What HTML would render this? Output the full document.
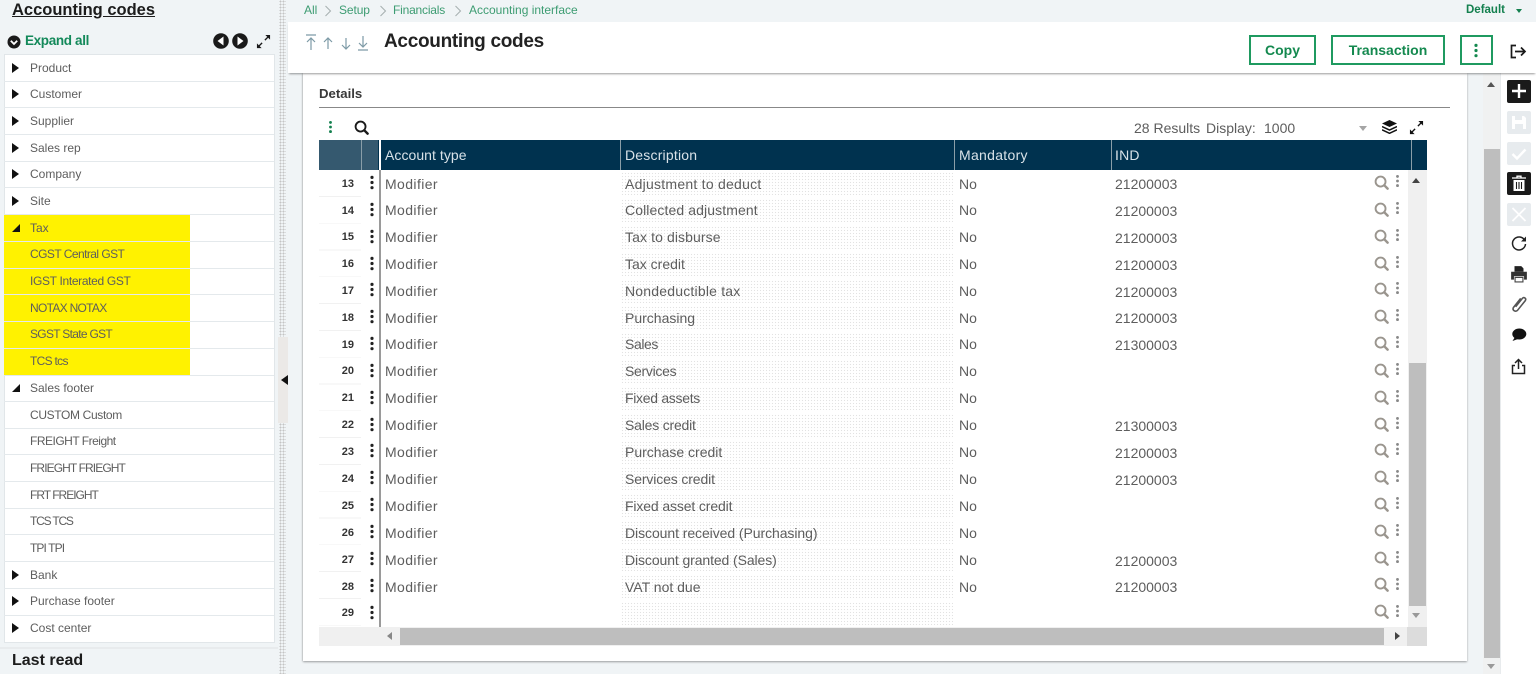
<!DOCTYPE html>
<html><head><meta charset="utf-8"><title>Accounting codes</title>
<style>
html,body{margin:0;padding:0;width:1536px;height:674px;overflow:hidden;background:#f0f4f6;font-family:"Liberation Sans",sans-serif;color:#585858}
div,span,svg{position:absolute;white-space:nowrap}
.t{left:30px;font-size:12px;line-height:16px;color:#5d5d5d}
.l{left:4px;width:270px;height:1px;background:#e4e9ec}
.a{left:12px;width:0;height:0;border-left:7px solid #111;border-top:5px solid transparent;border-bottom:5px solid transparent}
.o{left:12px;width:0;height:0;border-right:8px solid #111;border-top:8px solid transparent}
.n{left:319px;width:35px;text-align:right;font-size:11px;font-weight:bold;color:#333;line-height:14px}
.c{font-size:14px;line-height:18px;color:#5d5d5d}
.m{left:385px;letter-spacing:.4px}.k{left:959px}.i{left:1115px}.e{left:625px}
.d{left:621px;width:332px;height:23px;background-color:#fff;background-image:radial-gradient(#e2e2e2 0.7px,transparent 0.8px);background-size:3px 3px}
.h{top:146px;font-size:14px;line-height:18px;letter-spacing:.2px;color:#d8e2e8}
.v{width:1px;top:140px;height:30px;background:#8a9ea8}
.b{height:26px;border:2px solid #1f9a60;background:#fff;color:#14894f;font-weight:bold;font-size:14px;line-height:26px;text-align:center;top:35px}
.r{left:1507px;width:24px;height:23px;border-radius:2px;background:#1a1a1a}
.g{background:#e7ebee}
.bc{top:3px;font-size:12px;line-height:15px;color:#3d9c72}
.sp{top:5px}
</style></head><body>
<svg width="0" height="0" style="left:0;top:0"><defs>
<symbol id="q" viewBox="0 0 16 16"><circle cx="7" cy="7" r="5.3" fill="none" stroke="currentColor" stroke-width="2"/><path d="M11 11l3.5 3.500" stroke="currentColor" stroke-width="2.600" stroke-linecap="round"/></symbol>
<symbol id="v" viewBox="0 0 6 16"><circle cx="3" cy="2.500" r="1.700" fill="currentColor"/><circle cx="3" cy="8" r="1.700" fill="currentColor"/><circle cx="3" cy="13.500" r="1.700" fill="currentColor"/></symbol>
<symbol id="x" viewBox="0 0 16 16"><path d="M9.500 6.500L13 3" stroke="currentColor" fill="none" stroke-width="1.500"/><path d="M10 1h5v5z" fill="currentColor"/><path d="M6.500 9.500L3 13" stroke="currentColor" fill="none" stroke-width="1.500"/><path d="M1 10v5h5z" fill="currentColor"/></symbol>
<symbol id="s" viewBox="0 0 8 12"><path d="M1.500 1l5 5-5 5" fill="none" stroke="#a5afaf" stroke-width="1"/></symbol>
</defs></svg>

<!-- left panel -->
<div style="left:12px;top:0;font-size:16.500px;font-weight:bold;line-height:21px;color:#1c1c1c;text-decoration:underline">Accounting codes</div>
<svg style="left:7px;top:35px" width="14" height="14" viewBox="0 0 14 14"><circle cx="7" cy="7" r="6.500" fill="#1a1a1a"/><path d="M3.800 5.700L7 9l3.200-3.300" stroke="#fff" stroke-width="1.800" fill="none"/></svg>
<div style="left:25px;top:33px;font-size:13.500px;font-weight:bold;line-height:16px;color:#13895a;letter-spacing:-.35px">Expand all</div>
<svg style="left:213px;top:33px" width="36" height="16" viewBox="0 0 36 16"><circle cx="8" cy="8" r="7.800" fill="#1a1a1a"/><path d="M10.500 3.500v9L4.500 8z" fill="#fff"/><circle cx="27" cy="8" r="7.800" fill="#1a1a1a"/><path d="M24.500 3.500v9l6-4.500z" fill="#fff"/></svg>
<svg style="left:256px;top:34px;color:#1a1a1a" width="15" height="15"><use href="#x"/></svg>

<div style="left:4px;top:54px;width:269px;height:587px;background:#fff;border:1px solid #e1e6e9"></div>
<div style="left:4px;top:214px;width:186px;height:161px;background:#fff200"></div>
<div class="l" style="top:81px"></div><div class="l" style="top:107px"></div><div class="l" style="top:134px"></div><div class="l" style="top:161px"></div><div class="l" style="top:187px"></div><div class="l" style="top:214px"></div><div class="l" style="top:241px"></div><div class="l" style="top:268px"></div><div class="l" style="top:294px"></div><div class="l" style="top:321px"></div><div class="l" style="top:348px"></div><div class="l" style="top:375px"></div><div class="l" style="top:401px"></div><div class="l" style="top:428px"></div><div class="l" style="top:454px"></div><div class="l" style="top:481px"></div><div class="l" style="top:508px"></div><div class="l" style="top:534px"></div><div class="l" style="top:561px"></div><div class="l" style="top:588px"></div><div class="l" style="top:615px"></div>

<div class="a" style="top:63px"></div><div class="t" style="top:60px">Product</div>
<div class="a" style="top:89px"></div><div class="t" style="top:86px">Customer</div>
<div class="a" style="top:116px"></div><div class="t" style="top:113px">Supplier</div>
<div class="a" style="top:143px"></div><div class="t" style="top:140px">Sales rep</div>
<div class="a" style="top:169px"></div><div class="t" style="top:166px">Company</div>
<div class="a" style="top:196px"></div><div class="t" style="top:193px">Site</div>
<div class="o" style="top:224px"></div><div class="t" style="top:220px">Tax</div>
<div class="t" style="top:246px;letter-spacing:-.55px">CGST Central GST</div>
<div class="t" style="top:273px;letter-spacing:-.33px">IGST Interated GST</div>
<div class="t" style="top:300px;letter-spacing:-.7px">NOTAX NOTAX</div>
<div class="t" style="top:326px;letter-spacing:-.7px">SGST State GST</div>
<div class="t" style="top:353px;letter-spacing:-.7px">TCS tcs</div>
<div class="o" style="top:384px"></div><div class="t" style="top:380px">Sales footer</div>
<div class="t" style="top:407px;letter-spacing:-.35px">CUSTOM Custom</div>
<div class="t" style="top:433px;letter-spacing:-.5px">FREIGHT Freight</div>
<div class="t" style="top:460px;letter-spacing:-.9px">FRIEGHT FRIEGHT</div>
<div class="t" style="top:487px;letter-spacing:-1px">FRT FREIGHT</div>
<div class="t" style="top:513px;letter-spacing:-1.200px">TCS TCS</div>
<div class="t" style="top:540px;letter-spacing:-.9px">TPI TPI</div>
<div class="a" style="top:570px"></div><div class="t" style="top:567px">Bank</div>
<div class="a" style="top:596px"></div><div class="t" style="top:593px">Purchase footer</div>
<div class="a" style="top:623px"></div><div class="t" style="top:620px">Cost center</div>
<div style="left:0;top:647px;width:278px;height:2px;background:#e8ebed"></div>
<div style="left:12px;top:651px;font-size:16px;font-weight:bold;line-height:19px;color:#1c1c1c">Last read</div>

<!-- splitter -->
<div style="left:279px;top:0;width:7px;height:674px;background-image:radial-gradient(#c4c4c4 .8px,transparent 1px);background-size:3px 3px"></div>
<div style="left:278px;top:337px;width:10px;height:86px;background:#ebe9e7"></div>
<div style="left:281px;top:375px;width:0;height:0;border-right:7px solid #111;border-top:5px solid transparent;border-bottom:5px solid transparent"></div>

<!-- breadcrumb -->
<div class="bc" style="left:304px">All</div><svg class="sp" style="left:324px" width="8" height="12"><use href="#s"/></svg>
<div class="bc" style="left:339px;letter-spacing:-.1px">Setup</div><svg class="sp" style="left:379px" width="8" height="12"><use href="#s"/></svg>
<div class="bc" style="left:393px;letter-spacing:-.2px">Financials</div><svg class="sp" style="left:454px" width="8" height="12"><use href="#s"/></svg>
<div class="bc" style="left:469px">Accounting interface</div>
<div style="left:1466px;top:3px;font-size:11.500px;font-weight:bold;line-height:15px;color:#14804f">Default</div>
<div style="left:1516px;top:9px;width:0;height:0;border-top:4px solid #14804f;border-left:3px solid transparent;border-right:3px solid transparent"></div>

<!-- right toolbar bg + outer scrollbar -->
<div style="left:1500px;top:73px;width:36px;height:601px;background:#fff;border-left:1px solid #e8ebed"></div>
<div style="left:1483px;top:73px;width:17px;height:601px;background:#f0f1f1"></div>
<div style="left:1484px;top:149px;width:16px;height:509px;background:#bebebe"></div>
<div style="left:1487px;top:82px;width:0;height:0;border-bottom:5px solid #555;border-left:4.500px solid transparent;border-right:4.500px solid transparent"></div>
<div style="left:1487px;top:664px;width:0;height:0;border-top:5px solid #999;border-left:4.500px solid transparent;border-right:4.500px solid transparent"></div>

<!-- card -->
<div style="left:303px;top:73px;width:1164px;height:588px;background:#fff;box-shadow:0 1px 2px rgba(0,0,0,.35),-1px 0 1px rgba(0,0,0,.08)"></div>

<!-- header -->
<div style="left:288px;top:22px;width:1248px;height:51px;background:#fff;box-shadow:0 2px 2px -1px rgba(0,0,0,.4)"></div>
<svg style="left:304px;top:34px" width="66" height="17" viewBox="0 0 66 17" fill="none" stroke="#7d9aa6" stroke-width="1.200"><path d="M2 1h10M7 16V4M3 8l4-4 4 4"/><path d="M24 15V4M20 8l4-4 4 4"/><path d="M42 4v11M38 11l4 4 4-4"/><path d="M59 2v11M55 9l4 4 4-4M54 16h10"/></svg>
<div style="left:384px;top:30px;font-size:19px;font-weight:bold;line-height:23px;color:#222;letter-spacing:-.3px">Accounting codes</div>
<div class="b" style="left:1249px;width:63px">Copy</div>
<div class="b" style="left:1331px;width:110px">Transaction</div>
<div class="b" style="left:1460px;width:29px"></div>
<svg style="left:1473px;top:43px;color:#14894f" width="6" height="15"><use href="#v"/></svg>
<svg style="left:1510px;top:44px" width="17" height="15" viewBox="0 0 17 15" fill="none" stroke="#1a1a1a" stroke-width="1.700"><path d="M6 1.500H1.500v12H6M5 7.500h10M11 3.500l4 4-4 4"/></svg>

<!-- right toolbar buttons -->
<div class="r" style="top:80px"></div><svg style="left:1511px;top:83px" width="16" height="16"><path d="M8 1v14M1 8h14" stroke="#fff" stroke-width="2.400"/></svg>
<div class="r g" style="top:111px"></div><svg style="left:1511px;top:115px" width="16" height="15" viewBox="0 0 16 15"><path d="M1 1h12l2 2v11H1z" fill="#fff"/><path d="M4 1h7v4H4zM4 9h8v5H4z" fill="#e7ebee"/></svg>
<div class="r g" style="top:142px"></div><svg style="left:1511px;top:146px" width="16" height="15"><path d="M1.500 8l4.500 4.500 8.500-9" stroke="#fff" stroke-width="2.400" fill="none"/></svg>
<div class="r" style="top:172px"></div><svg style="left:1511px;top:175px" width="16" height="17" viewBox="0 0 16 17"><path d="M1 3h14M6 3V1.200h4V3" stroke="#fff" stroke-width="1.300" fill="none"/><path d="M2.500 5h11v11h-11z" fill="#fff"/><path d="M5.500 7v7M8 7v7M10.500 7v7" stroke="#1a1a1a" stroke-width="1.100"/></svg>
<div class="r g" style="top:203px"></div><svg style="left:1511px;top:207px" width="16" height="15"><path d="M1.500 1l13 13M14.500 1l-13 13" stroke="#fff" stroke-width="1.800"/></svg>
<svg style="left:1511px;top:235px" width="16" height="16" viewBox="0 0 16 16" fill="none"><path d="M13.800 5.500A6.500 6.500 0 1 0 14.500 9" stroke="#222" stroke-width="1.500"/><path d="M15 1.500v5h-5z" fill="#222"/></svg>
<svg style="left:1510px;top:265px" width="18" height="18" viewBox="0 0 16 16"><path d="M4 1h6l2 2v3H4z" fill="#222"/><path d="M1 6h14v7h-2.500v-3h-9v3H1z" fill="#333"/><path d="M4.500 11h7v4h-7z" fill="none" stroke="#444" stroke-width="1"/></svg>
<svg style="left:1510px;top:295px" width="18" height="18" viewBox="0 0 16 16" fill="none" stroke="#555" stroke-width="1.400"><path d="M5 10.500l6-7.500c1.500-1.700 3.800.1 2.600 2L6.800 13.500c-1.600 2-5 .3-3.800-2.300L9.500 3"/></svg>
<svg style="left:1511px;top:328px" width="16" height="14" viewBox="0 0 16 14"><ellipse cx="8.300" cy="6" rx="7" ry="5.500" fill="#111"/><path d="M4 9L1.500 13 7 11z" fill="#111"/></svg>
<svg style="left:1511px;top:358px" width="15" height="17" viewBox="0 0 15 17" fill="none" stroke="#222" stroke-width="1.500"><path d="M4 7.500H1.500v8h12v-8H11M7.500 11V2M4 5l3.500-3.500L11 5"/></svg>

<!-- card content -->
<div style="left:319px;top:86px;font-size:13.200px;font-weight:bold;line-height:16px;color:#3a3a3a">Details</div>
<div style="left:319px;top:107px;width:1131px;height:1px;background:#888"></div>
<svg style="left:328px;top:120px;color:#14804f" width="5" height="14"><use href="#v"/></svg>
<svg style="left:354px;top:120px;color:#1a1a1a" width="15" height="15"><use href="#q"/></svg>
<div class="c" style="left:1134px;top:119px">28 Results</div>
<div class="c" style="left:1206px;top:119px">Display:</div>
<div class="c" style="left:1264px;top:119px">1000</div>
<div style="left:1359px;top:126px;width:0;height:0;border-top:5px solid #a5a5a5;border-left:4.500px solid transparent;border-right:4.500px solid transparent"></div>
<svg style="left:1382px;top:120px" width="15" height="14" viewBox="0 0 15 14"><path d="M7.500 0L15 3.500 7.500 7 0 3.500z" fill="#111"/><path d="M0 6.500l7.500 3.500L15 6.500M0 9.800l7.500 3.500L15 9.800" stroke="#111" stroke-width="1.500" fill="none"/></svg>
<svg style="left:1409px;top:120px;color:#111" width="15" height="15"><use href="#x"/></svg>

<!-- table head -->
<div style="left:319px;top:140px;width:1108px;height:30px;background:#00324f"></div>
<div style="left:319px;top:140px;width:42px;height:30px;background:#35596f"></div>
<div style="left:362px;top:140px;width:16px;height:30px;background:#35596f"></div>
<div class="v" style="left:361px"></div><div class="v" style="left:379px;width:2px;background:#fff"></div>
<div class="v" style="left:620px"></div><div class="v" style="left:954px"></div><div class="v" style="left:1111px"></div><div class="v" style="left:1411px"></div>
<div class="h" style="left:385px;letter-spacing:.05px">Account type</div>
<div class="h" style="left:625px">Description</div>
<div class="h" style="left:959px;letter-spacing:.3px">Mandatory</div>
<div class="h" style="left:1115px">IND</div>
<div style="left:379px;top:170px;width:2px;height:457px;background:#9a9a9a"></div>
<div style="left:319px;top:170px;width:42px;height:457px;background-image:repeating-linear-gradient(#fff 0,#fff 26px,#f1f1f1 26px,#f1f1f1 26.800px)"></div>

<!-- description dotted cells -->
<div class="d" style="top:172px"></div><div class="d" style="top:199px"></div><div class="d" style="top:226px"></div><div class="d" style="top:253px"></div><div class="d" style="top:280px"></div><div class="d" style="top:306px"></div><div class="d" style="top:333px"></div><div class="d" style="top:360px"></div><div class="d" style="top:387px"></div><div class="d" style="top:414px"></div><div class="d" style="top:441px"></div><div class="d" style="top:467px"></div><div class="d" style="top:494px"></div><div class="d" style="top:521px"></div><div class="d" style="top:548px"></div><div class="d" style="top:575px"></div><div class="d" style="top:602px"></div>

<!-- rows -->
<div class="n" style="top:177px">13</div><div class="c m" style="top:175px">Modifier</div><div class="c e" style="top:175px;letter-spacing:.25px">Adjustment to deduct</div><div class="c k" style="top:175px">No</div><div class="c i" style="top:175px">21200003</div>
<div class="n" style="top:204px">14</div><div class="c m" style="top:201px">Modifier</div><div class="c e" style="top:201px;letter-spacing:.1px">Collected adjustment</div><div class="c k" style="top:201px">No</div><div class="c i" style="top:202px">21200003</div>
<div class="n" style="top:230px">15</div><div class="c m" style="top:228px">Modifier</div><div class="c e" style="top:228px;letter-spacing:.1px">Tax to disburse</div><div class="c k" style="top:228px">No</div><div class="c i" style="top:229px">21200003</div>
<div class="n" style="top:257px">16</div><div class="c m" style="top:255px">Modifier</div><div class="c e" style="top:255px">Tax credit</div><div class="c k" style="top:255px">No</div><div class="c i" style="top:256px">21200003</div>
<div class="n" style="top:284px">17</div><div class="c m" style="top:282px">Modifier</div><div class="c e" style="top:282px;letter-spacing:.2px">Nondeductible tax</div><div class="c k" style="top:282px">No</div><div class="c i" style="top:283px">21200003</div>
<div class="n" style="top:311px">18</div><div class="c m" style="top:309px">Modifier</div><div class="c e" style="top:309px">Purchasing</div><div class="c k" style="top:309px">No</div><div class="c i" style="top:309px">21200003</div>
<div class="n" style="top:338px">19</div><div class="c m" style="top:335px">Modifier</div><div class="c e" style="top:335px;letter-spacing:-.4px">Sales</div><div class="c k" style="top:335px">No</div><div class="c i" style="top:336px">21300003</div>
<div class="n" style="top:364px">20</div><div class="c m" style="top:362px">Modifier</div><div class="c e" style="top:362px;letter-spacing:-.3px">Services</div><div class="c k" style="top:362px">No</div>
<div class="n" style="top:391px">21</div><div class="c m" style="top:389px">Modifier</div><div class="c e" style="top:389px;letter-spacing:-.3px">Fixed assets</div><div class="c k" style="top:389px">No</div>
<div class="n" style="top:418px">22</div><div class="c m" style="top:416px">Modifier</div><div class="c e" style="top:416px;letter-spacing:-.2px">Sales credit</div><div class="c k" style="top:416px">No</div><div class="c i" style="top:417px">21300003</div>
<div class="n" style="top:445px">23</div><div class="c m" style="top:443px">Modifier</div><div class="c e" style="top:443px">Purchase credit</div><div class="c k" style="top:443px">No</div><div class="c i" style="top:444px">21200003</div>
<div class="n" style="top:472px">24</div><div class="c m" style="top:470px">Modifier</div><div class="c e" style="top:470px;letter-spacing:-.13px">Services credit</div><div class="c k" style="top:470px">No</div><div class="c i" style="top:471px">21200003</div>
<div class="n" style="top:499px">25</div><div class="c m" style="top:497px">Modifier</div><div class="c e" style="top:497px;letter-spacing:-.13px">Fixed asset credit</div><div class="c k" style="top:497px">No</div>
<div class="n" style="top:526px">26</div><div class="c m" style="top:524px">Modifier</div><div class="c e" style="top:524px;letter-spacing:-.07px">Discount received (Purchasing)</div><div class="c k" style="top:524px">No</div>
<div class="n" style="top:553px">27</div><div class="c m" style="top:551px">Modifier</div><div class="c e" style="top:551px;letter-spacing:-.1px">Discount granted (Sales)</div><div class="c k" style="top:551px">No</div><div class="c i" style="top:552px">21200003</div>
<div class="n" style="top:580px">28</div><div class="c m" style="top:578px">Modifier</div><div class="c e" style="top:578px">VAT not due</div><div class="c k" style="top:578px">No</div><div class="c i" style="top:578px">21200003</div>
<div class="n" style="top:606px">29</div>

<!-- row dots left -->
<svg style="left:369px;top:175px;color:#222" width="6" height="15"><use href="#v"/></svg><svg style="left:369px;top:202px;color:#222" width="6" height="15"><use href="#v"/></svg><svg style="left:369px;top:229px;color:#222" width="6" height="15"><use href="#v"/></svg><svg style="left:369px;top:256px;color:#222" width="6" height="15"><use href="#v"/></svg><svg style="left:369px;top:282px;color:#222" width="6" height="15"><use href="#v"/></svg><svg style="left:369px;top:309px;color:#222" width="6" height="15"><use href="#v"/></svg><svg style="left:369px;top:336px;color:#222" width="6" height="15"><use href="#v"/></svg><svg style="left:369px;top:363px;color:#222" width="6" height="15"><use href="#v"/></svg><svg style="left:369px;top:390px;color:#222" width="6" height="15"><use href="#v"/></svg><svg style="left:369px;top:417px;color:#222" width="6" height="15"><use href="#v"/></svg><svg style="left:369px;top:443px;color:#222" width="6" height="15"><use href="#v"/></svg><svg style="left:369px;top:470px;color:#222" width="6" height="15"><use href="#v"/></svg><svg style="left:369px;top:497px;color:#222" width="6" height="15"><use href="#v"/></svg><svg style="left:369px;top:524px;color:#222" width="6" height="15"><use href="#v"/></svg><svg style="left:369px;top:551px;color:#222" width="6" height="15"><use href="#v"/></svg><svg style="left:369px;top:578px;color:#222" width="6" height="15"><use href="#v"/></svg><svg style="left:369px;top:605px;color:#222" width="6" height="15"><use href="#v"/></svg>

<!-- row action icons -->
<svg style="left:1374px;top:175px;color:#9a958e" width="15" height="15"><use href="#q"/></svg><svg style="left:1395px;top:201px;color:#888" width="5" height="14"><use href="#v"/></svg>
<svg style="left:1395px;top:174px;color:#888" width="5" height="14"><use href="#v"/></svg><svg style="left:1374px;top:202px;color:#9a958e" width="15" height="15"><use href="#q"/></svg>
<svg style="left:1374px;top:229px;color:#9a958e" width="15" height="15"><use href="#q"/></svg><svg style="left:1395px;top:228px;color:#888" width="5" height="14"><use href="#v"/></svg>
<svg style="left:1374px;top:256px;color:#9a958e" width="15" height="15"><use href="#q"/></svg><svg style="left:1395px;top:255px;color:#888" width="5" height="14"><use href="#v"/></svg>
<svg style="left:1374px;top:282px;color:#9a958e" width="15" height="15"><use href="#q"/></svg><svg style="left:1395px;top:281px;color:#888" width="5" height="14"><use href="#v"/></svg>
<svg style="left:1374px;top:309px;color:#9a958e" width="15" height="15"><use href="#q"/></svg><svg style="left:1395px;top:308px;color:#888" width="5" height="14"><use href="#v"/></svg>
<svg style="left:1374px;top:336px;color:#9a958e" width="15" height="15"><use href="#q"/></svg><svg style="left:1395px;top:335px;color:#888" width="5" height="14"><use href="#v"/></svg>
<svg style="left:1374px;top:363px;color:#9a958e" width="15" height="15"><use href="#q"/></svg><svg style="left:1395px;top:362px;color:#888" width="5" height="14"><use href="#v"/></svg>
<svg style="left:1374px;top:390px;color:#9a958e" width="15" height="15"><use href="#q"/></svg><svg style="left:1395px;top:389px;color:#888" width="5" height="14"><use href="#v"/></svg>
<svg style="left:1374px;top:417px;color:#9a958e" width="15" height="15"><use href="#q"/></svg><svg style="left:1395px;top:416px;color:#888" width="5" height="14"><use href="#v"/></svg>
<svg style="left:1374px;top:443px;color:#9a958e" width="15" height="15"><use href="#q"/></svg><svg style="left:1395px;top:442px;color:#888" width="5" height="14"><use href="#v"/></svg>
<svg style="left:1374px;top:470px;color:#9a958e" width="15" height="15"><use href="#q"/></svg><svg style="left:1395px;top:469px;color:#888" width="5" height="14"><use href="#v"/></svg>
<svg style="left:1374px;top:497px;color:#9a958e" width="15" height="15"><use href="#q"/></svg><svg style="left:1395px;top:496px;color:#888" width="5" height="14"><use href="#v"/></svg>
<svg style="left:1374px;top:524px;color:#9a958e" width="15" height="15"><use href="#q"/></svg><svg style="left:1395px;top:523px;color:#888" width="5" height="14"><use href="#v"/></svg>
<svg style="left:1374px;top:551px;color:#9a958e" width="15" height="15"><use href="#q"/></svg><svg style="left:1395px;top:550px;color:#888" width="5" height="14"><use href="#v"/></svg>
<svg style="left:1374px;top:577px;color:#9a958e" width="15" height="15"><use href="#q"/></svg><svg style="left:1395px;top:577px;color:#888" width="5" height="14"><use href="#v"/></svg>
<svg style="left:1374px;top:604px;color:#9a958e" width="15" height="15"><use href="#q"/></svg><svg style="left:1395px;top:604px;color:#888" width="5" height="14"><use href="#v"/></svg>

<!-- inner scrollbars -->
<div style="left:1408px;top:170px;width:19px;height:457px;background:#f0f0f0"></div>
<div style="left:1409px;top:363px;width:17px;height:243px;background:#bebebe"></div>
<div style="left:1412px;top:178px;width:0;height:0;border-bottom:5px solid #444;border-left:4.500px solid transparent;border-right:4.500px solid transparent"></div>
<div style="left:1412px;top:613px;width:0;height:0;border-top:5px solid #999;border-left:4.500px solid transparent;border-right:4.500px solid transparent"></div>
<div style="left:319px;top:627px;width:1108px;height:19px;background:#f0f0f0"></div>
<div style="left:400px;top:628px;width:984px;height:17px;background:#bebebe"></div>
<div style="left:1407px;top:627px;width:20px;height:19px;background:#dcdcdc"></div>
<div style="left:387px;top:632px;width:0;height:0;border-right:5px solid #888;border-top:4.500px solid transparent;border-bottom:4.500px solid transparent"></div>
<div style="left:1395px;top:632px;width:0;height:0;border-left:5px solid #444;border-top:4.500px solid transparent;border-bottom:4.500px solid transparent"></div>
</body></html>
